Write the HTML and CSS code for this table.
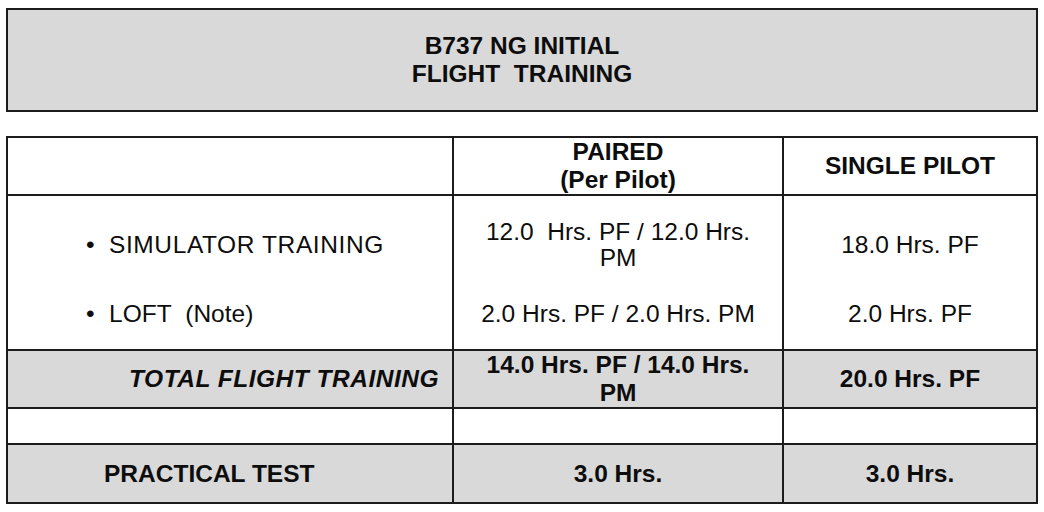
FILE: index.html
```html
<!DOCTYPE html>
<html>
<head>
<meta charset="utf-8">
<link rel="stylesheet" href="styles.css">
</head>
<body>
<div class="page">
  <div class="title-box">
    <div class="title">B737 NG INITIAL<br>FLIGHT&nbsp; TRAINING</div>
  </div>
  <div class="grid">
    <div class="cell head"></div>
    <div class="cell head center bold">PAIRED<br>(Per Pilot)</div>
    <div class="cell head center bold">SINGLE PILOT</div>

    <div class="cell sim nob item"><span class="bullet">•</span><span class="wide">SIMULATOR TRAINING</span></div>
    <div class="cell sim nob center">12.0&nbsp; Hrs. PF / 12.0 Hrs. PM</div>
    <div class="cell sim nob center">18.0 Hrs. PF</div>

    <div class="cell loft item"><span class="bullet">•</span>LOFT&nbsp; (Note)</div>
    <div class="cell loft center">2.0 Hrs. PF / 2.0 Hrs. PM</div>
    <div class="cell loft center">2.0 Hrs. PF</div>

    <div class="cell gray total bold italic">TOTAL FLIGHT TRAINING</div>
    <div class="cell gray center bold tight">14.0 Hrs. PF / 14.0 Hrs. PM</div>
    <div class="cell gray center bold">20.0 Hrs. PF</div>

    <div class="cell"></div>
    <div class="cell"></div>
    <div class="cell"></div>

    <div class="cell gray bold practical">PRACTICAL TEST</div>
    <div class="cell gray center bold">3.0 Hrs.</div>
    <div class="cell gray center bold">3.0 Hrs.</div>
  </div>
</div>
</body>
</html>
```

FILE: styles.css
```css
html, body {
  margin: 0;
  padding: 0;
  background: #ffffff;
}

body {
  font-family: "Liberation Sans", Arial, sans-serif;
  font-size: 24.5px;
  color: #0d0d0d;
}

.page {
  padding-top: 8px;
  margin-left: 6px;
  width: 1032px;
}

.title-box {
  box-sizing: border-box;
  height: 104px;
  border: 2px solid #1c1c1c;
  background: #d9d9d9;
  display: flex;
  align-items: center;
  justify-content: center;
}

.title {
  font-weight: bold;
  text-align: center;
  line-height: 28px;
}

.grid {
  margin-top: 24px;
  display: grid;
  grid-template-columns: 446px 330px 254px;
  grid-template-rows: 58px 89px 66px 58px 36px 59px;
  border-top: 2px solid #1c1c1c;
  border-left: 2px solid #1c1c1c;
}

.cell {
  box-sizing: border-box;
  border-right: 2px solid #1c1c1c;
  border-bottom: 2px solid #1c1c1c;
  display: flex;
  align-items: center;
  padding: 0 12px;
  line-height: 26px;
}

.cell.nob {
  border-bottom: none;
}

.center {
  justify-content: center;
  text-align: center;
}

.bold {
  font-weight: bold;
}

.italic {
  font-style: italic;
}

.head {
  line-height: 28px;
}

.tight {
  line-height: 28px;
}

.sim {
  padding-top: 9px;
}

.loft {
  padding-bottom: 6px;
}

.item {
  padding-left: 78px;
}

.bullet {
  display: inline-block;
  width: 23px;
}

.wide {
  letter-spacing: 0.6px;
}

.gray {
  background: #d9d9d9;
}

.total {
  justify-content: flex-end;
  padding-right: 13px;
  letter-spacing: 0.5px;
}

.practical {
  padding-left: 96px;
}
```
